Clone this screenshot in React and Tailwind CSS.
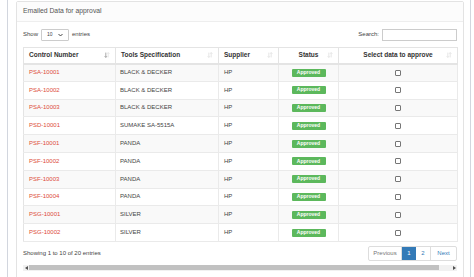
const rows = [
  ["PSA-10001", "BLACK & DECKER"],
  ["PSA-10002", "BLACK & DECKER"],
  ["PSA-10003", "BLACK & DECKER"],
  ["PSD-10001", "SUMAKE SA-5515A"],
  ["PSF-10001", "PANDA"],
  ["PSF-10002", "PANDA"],
  ["PSF-10003", "PANDA"],
  ["PSF-10004", "PANDA"],
  ["PSG-10001", "SILVER"],
  ["PSG-10002", "SILVER"],
];

function SortIcon({ active }) {
  return (
    <svg width="6" height="6" viewBox="0 0 10 10" className="shrink-0">
      <path d="M3 1v8M1 7l2 2 2-2" stroke={active ? "#888" : "#ddd"} strokeWidth="1.2" fill="none" />
      <path d="M7 9V1M5 3l2-2 2 2" stroke="#ddd" strokeWidth="1.2" fill="none" />
    </svg>
  );
}

function Th({ children, w, center, active }) {
  return (
    <th
      className={`border-r border-b-2 border-[#e4e4e4] px-[5px] h-[16px] font-bold text-[#333] ${w}`}
    >
      <div className={`flex items-center ${center ? "justify-center relative" : "justify-between"}`}>
        <span>{children}</span>
        {center ? (
          <span className="absolute right-0">
            <SortIcon />
          </span>
        ) : (
          <SortIcon active={active} />
        )}
      </div>
    </th>
  );
}

export default function App() {
  return (
    <div
      className="w-[474px] h-[277px] bg-white overflow-hidden text-[#333]"
      style={{ fontFamily: '"Liberation Sans", Arial, sans-serif' }}
    >
      <div className="ml-[7px] w-[464px] h-full border-x border-[#d2d6de] pl-[8px] pr-[6px] pt-px">
        <div className="h-[290px] border border-[#e3e3e3] rounded-[2px]">
          <div className="h-[20px] flex items-center pl-[6px] border-b border-[#eee] bg-[#fcfcfc] text-[6.8px] text-[#555]">
            Emailed Data for approval
          </div>
          <div className="pl-[6px] pr-[6px]">
            <div className="h-[25px] flex items-center justify-between text-[6px] text-[#444]">
              <div className="flex items-center gap-[3px]">
                <span>Show</span>
                <div className="w-[28px] h-[12px] border border-[#ccc] rounded-[1px] flex items-center justify-between px-[5px] text-[5px] bg-white">
                  <span>10</span>
                  <svg width="5" height="4" viewBox="0 0 10 6">
                    <path d="M1 1l4 4 4-4" stroke="#333" strokeWidth="1.8" fill="none" />
                  </svg>
                </div>
                <span>entries</span>
              </div>
              <div className="flex items-center gap-[3px]">
                <span>Search:</span>
                <div className="w-[75px] h-[12px] border border-[#ccc] bg-white" />
              </div>
            </div>
            <table className="w-[434px] border-collapse border-l border-t border-[#e4e4e4] text-[6px] table-fixed">
              <thead>
                <tr className="text-[6.5px]">
                  <Th w="w-[92px]" active>Control Number</Th>
                  <Th w="w-[103px]">Tools Specification</Th>
                  <Th w="w-[60px]">Supplier</Th>
                  <Th w="w-[60px]" center>Status</Th>
                  <Th w="w-[119px]" center>Select data to approve</Th>
                </tr>
              </thead>
              <tbody>
                {rows.map(([code, spec], i) => (
                  <tr key={code} className={`h-[17.8px] ${i % 2 === 0 ? "bg-[#f9f9f9]" : "bg-white"}`}>
                    <td className="border-r border-b border-[#eaeaea] px-[5px] text-[#dd4b39]">{code}</td>
                    <td className="border-r border-b border-[#eaeaea] px-[4px] text-[#444]">{spec}</td>
                    <td className="border-r border-b border-[#eaeaea] px-[5px] text-[#444]">HP</td>
                    <td className="border-r border-b border-[#eaeaea] px-[5px]">
                      <div className="flex justify-center">
                        <span className="w-[34px] h-[8px] rounded-[1px] bg-[#5cb85c] text-white text-[5px] font-bold flex items-center justify-center">
                          Approved
                        </span>
                      </div>
                    </td>
                    <td className="border-r border-b border-[#eaeaea] px-[5px]">
                      <div className="flex justify-center">
                        <span className="w-[6px] h-[6px] border border-[#767676] rounded-[1px] bg-white" />
                      </div>
                    </td>
                  </tr>
                ))}
              </tbody>
            </table>
            <div className="h-[23px] w-[434px] flex items-center justify-between text-[6px] text-[#444]">
              <span>Showing 1 to 10 of 20 entries</span>
              <div className="flex h-[15px] border border-[#ddd] rounded-[2px] text-[6px]">
                <span className="w-[33px] flex items-center justify-center text-[#777] border-r border-[#ddd]">Previous</span>
                <span className="w-[14px] flex items-center justify-center bg-[#337ab7] text-white">1</span>
                <span className="w-[15px] flex items-center justify-center text-[#337ab7] border-r border-[#ddd]">2</span>
                <span className="w-[25px] flex items-center justify-center text-[#337ab7]">Next</span>
              </div>
            </div>
            <div className="w-[434px] h-[6px] flex items-center bg-[#f1f1f1]">
              <span className="w-[6px] flex justify-center">
                <svg width="3" height="4" viewBox="0 0 3 4"><path d="M3 0L0 2l3 2z" fill="#505050" /></svg>
              </span>
              <div className="flex-1 h-[5px] bg-[#c1c1c1]" />
              <span className="w-[6px] flex justify-center ml-[12px]">
                <svg width="3" height="4" viewBox="0 0 3 4"><path d="M0 0l3 2-3 2z" fill="#505050" /></svg>
              </span>
            </div>
          </div>
        </div>
      </div>
    </div>
  );
}
